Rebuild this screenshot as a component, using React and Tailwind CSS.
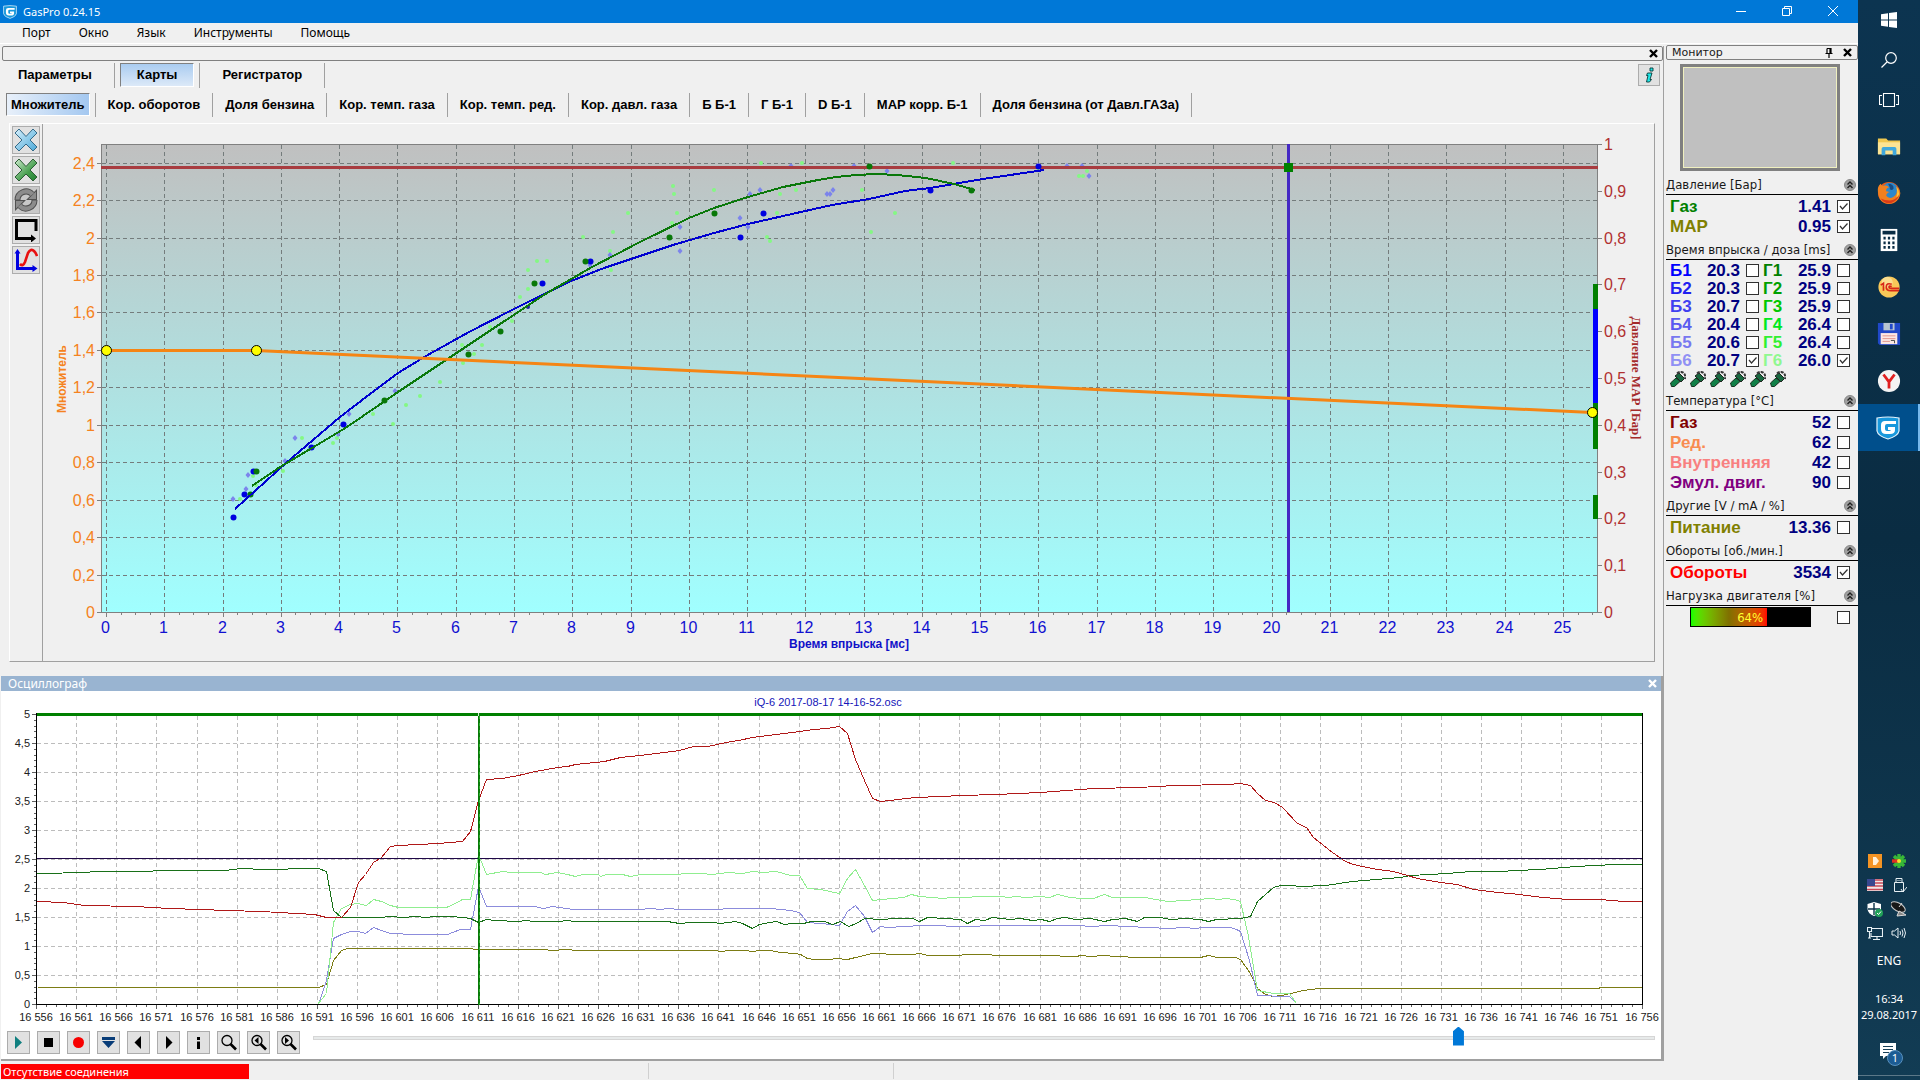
//gaspro main window
import React, { useState } from "react";

const mapTabs = [
  "Множитель",
  "Кор. оборотов",
  "Доля бензина",
  "Кор. темп. газа",
  "Кор. темп. ред.",
  "Кор. давл. газа",
  "Б Б-1",
  "Г Б-1",
  "D Б-1",
  "МАР корр. Б-1",
  "Доля бензина (от Давл.ГАЗа)",
];

const injectors = [
  { n: 1, petrol: "20.3", gas: "25.9", pc: "text-[#0000ff]", gc: "text-[#008000]" },
  { n: 2, petrol: "20.3", gas: "25.9", pc: "text-[#2020f0]", gc: "text-[#00a000]" },
  { n: 3, petrol: "20.7", gas: "25.9", pc: "text-[#4040f0]", gc: "text-[#00c800]" },
  { n: 4, petrol: "20.4", gas: "26.4", pc: "text-[#5a5af0]", gc: "text-[#00e820]" },
  { n: 5, petrol: "20.6", gas: "26.4", pc: "text-[#7878f0]", gc: "text-[#30f030]" },
  { n: 6, petrol: "20.7", gas: "26.0", pc: "text-[#9090f4]", gc: "text-[#90f890]", on: true },
];

// ---------------------- MAP CHART DATA ----------------------
const blueCurve =
  "235,509 286,463 340,417 370,394 398,373 426,356 469,332 514,309 571,281 604,268 640,256 673,245 714,233 748,224 783,216 832,205 869,199 905,191 930,188 983,179 1044,170";
const greenCurve =
  "252,486 280,467 312,448 347,427 398,392 449,358 500,324 547,293 592,267 640,242 689,218 714,208 748,197 783,187 818,180 836,177 856,175 876,174 897,175 926,178 954,184 975,190";

const bluePoints = [
  [233, 517], [244, 494], [253, 471], [311, 447], [343, 424], [542, 283],
  [590, 261], [740, 237], [763, 213], [930, 190], [1038, 166],
];
const greenPoints = [
  [250, 494], [256, 471], [384, 400], [468, 354], [500, 331], [534, 283],
  [585, 261], [669, 237], [714, 213], [971, 190], [869, 166],
];
const lilacPoints = [
  [233, 499], [246, 489], [248, 475], [285, 461], [295, 438], [338, 434],
  [349, 414], [395, 391], [590, 265], [610, 255], [680, 227], [680, 251],
  [740, 218], [748, 227], [750, 194], [760, 190], [827, 194], [830, 194],
  [833, 190], [887, 171], [791, 166], [854, 166], [1067, 166], [1082, 166],
  [1089, 176],
];
const limePoints = [
  [240, 499], [253, 476], [256, 485], [283, 471], [302, 438], [333, 443],
  [337, 438], [373, 414], [393, 424], [406, 405], [420, 396], [440, 382],
  [462, 345], [463, 363], [474, 354], [482, 345], [490, 327], [512, 321],
  [520, 297], [528, 289], [528, 270], [537, 261], [547, 261], [583, 237],
  [610, 251], [611, 270], [613, 232], [628, 213], [672, 223], [673, 186],
  [674, 194], [677, 213], [714, 190], [761, 163], [767, 237], [770, 241],
  [777, 213], [780, 194], [796, 190], [802, 163], [862, 190], [871, 232],
  [895, 213], [953, 163], [1038, 168], [1079, 176], [1083, 176], [1087, 171],
];

// ---------------------- OSCILLOGRAPH DATA ----------------------
const traces = [
  {
    color: "#7c7c14",
    points:
      "37,987 318,987 326,984 333,960 341,950 347,948 465,948 480,949 545,949 550,950 567,949 575,950 715,950 720,951 730,950 745,950 752,951 760,950 770,950 780,952 795,953 800,954 807,958 814,959 830,959 835,958 847,959 855,957 872,953 883,953 888,954 912,954 919,953 928,955 958,955 965,954 988,954 995,955 1055,955 1063,956 1075,956 1081,955 1090,956 1104,955 1115,956 1140,957 1200,957 1208,955 1217,957 1235,957 1240,959 1250,973 1257,988 1265,994 1273,996 1281,995 1290,993 1303,990 1318,988 1598,988 1600,987 1642,987",
  },
  {
    color: "#8c8cdc",
    points:
      "318,1004 326,980 333,938 341,934 350,931 358,931 365,933 373,927 381,930 390,933 400,933 405,934 447,934 460,929 470,929 478,886 486,906 534,906 543,908 552,906 573,909 640,909 650,908 660,909 667,908 680,909 715,909 730,908 770,908 790,910 799,912 807,922 820,923 830,924 839,925 847,911 855,905 864,916 872,932 880,926 887,927 905,926 920,925 970,926 990,925 1030,925 1080,925 1088,926 1110,925 1125,926 1150,927 1167,928 1185,927 1193,928 1205,927 1230,927 1236,929 1240,931 1249,960 1257,995 1271,995 1272,996 1289,996 1296,1003",
  },
  {
    color: "#90ee90",
    points:
      "317,1004 326,993 333,922 341,908 350,904 357,903 366,905 373,899 381,901 390,905 398,907 420,907 446,907 455,903 462,899 470,899 478,854 486,874 502,871 510,872 540,872 545,874 557,872 567,874 575,876 582,874 598,874 600,876 606,874 622,874 630,876 640,874 676,874 685,873 700,873 712,874 727,872 742,873 752,871 762,872 776,871 790,875 799,875 807,888 820,889 839,893 847,878 855,869 864,885 872,900 892,898 903,897 911,894 919,896 932,897 943,898 950,897 967,897 976,896 1000,896 1008,897 1016,896 1025,897 1040,896 1049,897 1057,894 1070,897 1080,898 1093,898 1104,894 1112,897 1145,897 1155,899 1168,901 1183,900 1198,899 1210,898 1218,899 1225,898 1234,899 1240,901 1248,936 1257,990 1273,993 1289,993 1296,1003",
  },
  {
    color: "#187018",
    points:
      "37,873 88,872 91,871 150,871 155,870 224,870 241,868 248,868 257,869 318,868 326,871 333,910 341,917 380,917 390,916 402,917 415,916 425,917 435,916 450,916 463,917 470,918 478,922 486,919 494,920 518,921 525,920 534,921 559,921 566,920 574,921 667,921 679,923 690,922 712,922 720,923 735,921 742,923 752,928 759,924 769,922 776,921 784,924 791,923 803,923 811,921 824,921 832,924 840,921 848,926 856,923 864,918 880,919 895,918 912,918 919,921 927,917 945,918 960,919 967,923 975,919 984,920 992,917 1010,919 1020,918 1032,920 1041,919 1049,921 1057,918 1065,917 1075,919 1090,918 1104,921 1112,919 1125,918 1137,921 1144,917 1160,917 1170,919 1185,918 1200,919 1208,921 1216,919 1240,918 1250,916 1257,901 1265,894 1273,887 1280,885 1290,885 1300,886 1325,885 1352,881 1375,879 1400,877 1410,875 1447,873 1470,871 1500,871 1515,870 1540,869 1575,866 1595,865 1615,864 1642,864",
  },
  {
    color: "#b01818",
    points:
      "37,901 63,902 84,905 135,906 169,908 200,909 226,910 261,911 314,914 326,917 341,917 350,907 358,882 365,874 373,862 381,857 390,846 398,845 438,843 462,841 470,831 478,800 486,779 502,778 518,775 535,771 557,767 567,766 575,764 604,761 620,757 640,755 679,750 693,746 707,746 726,742 738,740 752,737 799,731 813,729 827,728 839,726 847,733 855,759 864,780 872,798 880,801 889,800 915,797 940,796 962,795 995,794 1040,792 1093,788 1138,787 1175,785 1228,784 1240,783 1250,785 1257,793 1265,800 1274,802 1282,807 1297,823 1306,827 1313,837 1332,852 1345,861 1353,864 1362,866 1377,869 1393,871 1407,875 1417,878 1440,882 1457,884 1473,889 1497,892 1510,893 1543,897 1567,899 1600,899 1623,901 1642,901",
  },
];

const range = (n) => Array.from({ length: n }, (_, i) => i);
const comma = (v) => String(Math.round(v * 10) / 10).replace(".", ",");

function MapChart() {
  const px = (v) => Math.round(106 + v * 58.28) + 0.5;
  const py = (v) => Math.round(612 - v * 187.2) + 0.5;

  return (
    <svg
      viewBox="43 124 1611 537"
      className="block h-full w-full font-['Liberation_Sans',Arial,sans-serif]"
    >
      <defs>
        <linearGradient id="plotFill" x1="0" y1="0" x2="0" y2="1">
          <stop offset="0" stopColor="#c0c0c0" />
          <stop offset="1" stopColor="#a0ffff" />
        </linearGradient>
      </defs>
      <rect x="102" y="145" width="1496" height="468" fill="url(#plotFill)" />

      {/* grid */}
      <g stroke="#747c7c" strokeDasharray="4 3" shapeRendering="crispEdges">
        {range(26).map((i) => (
          <line key={i} x1={px(i)} y1="145" x2={px(i)} y2="612" />
        ))}
        {range(12).map((i) => (
          <line key={i} x1="102" y1={py((i + 1) * 0.2)} x2="1598" y2={py((i + 1) * 0.2)} />
        ))}
      </g>

      {/* frame and ticks */}
      <g stroke="#808080" fill="none" shapeRendering="crispEdges">
        <rect x="101.5" y="144.5" width="1496" height="468" />
        {range(13).map((i) => (
          <line key={i} x1="97" y1={py(i * 0.2)} x2="101" y2={py(i * 0.2)} />
        ))}
        {range(11).map((i) => (
          <line key={i} x1="1598" y1={612.5 - i * 46.8} x2="1602" y2={612.5 - i * 46.8} />
        ))}
        {range(103).map((i) => (
          <line key={i} x1={px(i / 4)} y1="613" x2={px(i / 4)} y2={i % 4 ? 615 : 617} />
        ))}
      </g>

      {/* axis numbers */}
      <g fontSize="16">
        {range(13).map((i) => (
          <text key={i} x="95" y={py(i * 0.2) + 5.5} textAnchor="end" fill="#f58220">
            {comma(i * 0.2)}
          </text>
        ))}
        {range(26).map((i) => (
          <text key={i} x={px(i) - 1} y="633" textAnchor="middle" fill="#1010d0">
            {i}
          </text>
        ))}
        {range(11).map((i) => (
          <text key={i} x="1604" y={Math.round(618 - i * 46.8)} fill="#b03030">
            {comma(i * 0.1)}
          </text>
        ))}
      </g>
      <text x="849" y="648" textAnchor="middle" fontSize="12" fontWeight="700" fill="#1010c8">
        Время впрыска [мс]
      </text>
      <text
        transform="translate(66 379) rotate(-90)"
        textAnchor="middle"
        fontSize="12"
        fontWeight="700"
        fill="#f58220"
      >
        Множитель
      </text>
      <text
        transform="translate(1632 378) rotate(90)"
        textAnchor="middle"
        fontSize="13"
        fontWeight="700"
        fill="#a52a2a"
        className="font-['Liberation_Serif','Times_New_Roman',serif]"
      >
        Давление МАР [Бар]
      </text>

      {/* collected points */}
      <g fill="#84f884">
        {limePoints.map(([x, y]) => (
          <circle key={`${x}-${y}`} cx={x} cy={y} r="2" />
        ))}
      </g>
      <g fill="#7c84ec">
        {lilacPoints.map(([x, y]) => (
          <path key={`${x}-${y}`} d={`M${x} ${y - 3}l2.5 3l-2.5 3l-2.5-3z`} />
        ))}
      </g>
      <rect x="101" y="166" width="1497" height="3" fill="#a83c40" />
      <g fill="#0000e0">
        {bluePoints.map(([x, y]) => (
          <circle key={`${x}-${y}`} cx={x + 0.5} cy={y + 0.5} r="3" />
        ))}
        <circle cx="528" cy="307" r="2" fill="#2020a0" />
      </g>
      <g fill="#087808">
        {greenPoints.map(([x, y]) => (
          <circle key={`${x}-${y}`} cx={x + 0.5} cy={y + 0.5} r="3" />
        ))}
      </g>
      <g fill="none" strokeWidth="2" shapeRendering="crispEdges">
        <polyline points={blueCurve} stroke="#0000d0" />
        <polyline points={greenCurve} stroke="#0a780a" />
      </g>

      {/* live position */}
      <rect x="1287" y="144" width="3" height="468" fill="#4428c4" />
      <rect x="1284" y="163" width="9" height="9" fill="#008000" />

      {/* zone bars on the right edge */}
      <rect x="1593" y="284" width="5" height="25" fill="#008000" />
      <rect x="1593" y="309" width="5" height="94" fill="#0000ff" />
      <rect x="1593" y="403" width="5" height="46" fill="#008000" />
      <rect x="1593" y="495" width="5" height="24" fill="#008000" />

      <polyline points="106,350.5 256,350.5 1592,412.5" fill="none" stroke="#f58514" strokeWidth="3" />
      <g fill="#ffff00" stroke="#000">
        <circle cx="106.5" cy="350.5" r="5" />
        <circle cx="256.5" cy="350.5" r="5" />
        <circle cx="1592.5" cy="412.5" r="5" />
      </g>
    </svg>
  );
}

function OscChart() {
  const px = (i) => Math.round(36 + i * 40.14) + 0.5;

  return (
    <svg
      viewBox="1 691 1660 333"
      className="block w-full font-['Liberation_Sans',Arial,sans-serif]"
    >
      <text x="828" y="706" textAnchor="middle" fontSize="11" fill="#1414b8">
        iQ-6 2017-08-17 14-16-52.osc
      </text>
      <g stroke="#bcbcbc" strokeDasharray="4 3" shapeRendering="crispEdges">
        {range(40).map((i) => (
          <line key={i} x1={px(i)} y1="716" x2={px(i)} y2="1003" />
        ))}
        {range(9).map((i) => (
          <line key={i} x1="37" y1={975.5 - i * 29} x2="1642" y2={975.5 - i * 29} />
        ))}
      </g>
      <g stroke="#606060" shapeRendering="crispEdges">
        {range(161).map((i) => (
          <line key={i} x1={px(i / 4)} y1="1005" x2={px(i / 4)} y2={i % 4 ? 1007 : 1009} />
        ))}
        {range(51).map((i) => (
          <line
            key={i}
            x1={i % 5 ? 34 : 32}
            y1={Math.round(1004 - i * 5.8) + 0.5}
            x2="37"
            y2={Math.round(1004 - i * 5.8) + 0.5}
          />
        ))}
      </g>
      <g fontSize="11" fill="#202020">
        {range(11).map((i) => (
          <text key={i} x="30" y={1008 - i * 29} textAnchor="end">
            {comma(i * 0.5)}
          </text>
        ))}
        {range(41).map((i) => (
          <text key={i} x={px(i) - 0.5} y="1021" textAnchor="middle">
            {`16 ${556 + i * 5}`}
          </text>
        ))}
      </g>

      {traces.map((t) => (
        <polyline
          key={t.color}
          points={t.points}
          transform="translate(.5 .5)"
          fill="none"
          stroke={t.color}
          shapeRendering="crispEdges"
        />
      ))}
      <g shapeRendering="crispEdges">
        <rect x="37" y="858" width="1605" height="1" fill="#200848" />
        <rect x="36" y="713" width="1" height="292" fill="#000" />
        <rect x="36" y="1004" width="1607" height="1" fill="#000" />
        <rect x="1642" y="713" width="1" height="292" fill="#000" />
        <rect x="37" y="713" width="1605" height="3" fill="#008000" />
        <rect x="478" y="713" width="2" height="292" fill="#0a7a0a" />
        <line x1="479.5" y1="716" x2="479.5" y2="1004" stroke="#30b030" strokeDasharray="3 4" />
        <rect x="478" y="713" width="1" height="3" fill="#d0f0d0" />
      </g>
    </svg>
  );
}

function Logo({ className }) {
  return (
    <svg viewBox="0 0 24 24" className={className}>
      <path d="M1 2Q12 0 23 2V15Q22 20 12 23Q2 20 1 15Z" fill="#1898dc" stroke="#e8f4fc" strokeWidth="1.2" />
      <path d="M20 5H9Q5 5 5 9V13Q5 18 10 18H14Q19 18 19 14V11H12V14H15Q14.5 15 13 15H11Q9 15 9 13V10Q9 8 11 8H20Z" fill="#fff" />
    </svg>
  );
}

function CloseMark({ className }) {
  return (
    <svg viewBox="0 0 9 9" className={className}>
      <path d="M1 1L8 8M8 1L1 8" fill="none" stroke="currentColor" strokeWidth="2.4" />
    </svg>
  );
}

function Check({ id, label, checked }) {
  return (
    <span className="relative block h-[13px] w-[13px] shrink-0">
      <input
        id={id}
        type="checkbox"
        aria-label={label}
        defaultChecked={checked}
        className="peer block h-[13px] w-[13px] appearance-none border border-[#303030] bg-white"
      />
      <svg
        viewBox="0 0 13 13"
        className="pointer-events-none absolute inset-0 hidden h-[13px] w-[13px] peer-checked:block"
      >
        <path d="M3 6L5.5 9L10.5 3.5" fill="none" stroke="#303030" strokeWidth="1.2" />
      </svg>
    </span>
  );
}

function Section({ title, children }) {
  const [open, setOpen] = useState(true);
  return (
    <section>
      <h2 className="flex h-5 items-center justify-between border-b border-black pr-[2px] font-['DejaVu_Sans_Condensed','DejaVu_Sans',sans-serif] text-[13px] leading-none font-normal whitespace-nowrap text-[#181818]">
        {title}
        <button aria-label={title} onClick={() => setOpen(!open)}>
          <svg viewBox="0 0 12 12" className="block h-3 w-3">
            <circle cx="6" cy="6" r="5.5" fill="#a0a0a0" stroke="#888" />
            <path d="M3.5 5.5L6 3L8.5 5.5M3.5 9L6 6.5L8.5 9" fill="none" stroke="#202020" strokeWidth="1.4" />
          </svg>
        </button>
      </h2>
      {open && <div className="pt-px pr-2 pb-1 pl-1">{children}</div>}
    </section>
  );
}

function Reading({ id, name, value, color, checked }) {
  return (
    <div className="flex h-5 items-center">
      <label htmlFor={id} className={`flex-1 ${color}`}>
        {name}
      </label>
      <output className="mr-[6px] text-[#000080]">{value}</output>
      <Check id={id} checked={checked} />
    </div>
  );
}

function Monitor() {
  return (
    <aside className="w-[194px] shrink-0 pl-[2px]">
      <div className="-mt-px flex h-[15px] items-center rounded-[2px] border border-[#808080] pl-[5px]">
        <span className="flex-1 font-['DejaVu_Sans',sans-serif] text-[11px] leading-none text-[#181818]">
          Монитор
        </span>
        <button aria-label="Закрепить" className="mr-[10px]">
          <svg viewBox="0 0 8 10" className="block h-[10px] w-2">
            <path d="M2 0.5H6V5.5M2 0.5V5.5M0.5 5.5H7.5M4 6V10M5 1V5" fill="none" stroke="#000" strokeWidth="1.2" />
          </svg>
        </button>
        <button aria-label="Закрыть монитор" className="mr-[5px] text-black">
          <CloseMark className="block h-[9px] w-[9px]" />
        </button>
      </div>
      <div className="mt-1 mb-1 ml-[14px] h-[107px] w-40 border-[3px] border-[#808080] bg-[#c0c0c0]">
        <div className="h-full w-full border border-[#f0f0c0]" />
      </div>

      <div className="font-['Liberation_Sans',Arial,sans-serif] text-[17px] leading-none font-bold">
        <Section title="Давление [Бар]">
          <Reading id="pGas" name="Газ" value="1.41" color="text-[#008000]" checked />
          <Reading id="pMap" name="MAP" value="0.95" color="text-[#808000]" checked />
        </Section>

        <Section title="Время впрыска / доза [ms]">
          {injectors.map((row) => (
            <div key={row.n} className="flex h-[18px] items-center">
              <label htmlFor={`petrol${row.n}`} className={`w-8 ${row.pc}`}>
                {`Б${row.n}`}
              </label>
              <output className="mr-[6px] flex-1 text-right text-[#000080]">{row.petrol}</output>
              <Check id={`petrol${row.n}`} checked={row.on} />
              <label htmlFor={`gas${row.n}`} className={`ml-1 w-[30px] ${row.gc}`}>
                {`Г${row.n}`}
              </label>
              <output className="mr-[6px] flex-1 text-right text-[#000080]">{row.gas}</output>
              <Check id={`gas${row.n}`} checked={row.on} />
            </div>
          ))}
          <div className="flex h-[18px] items-end gap-1">
            {range(6).map((i) => (
              <svg key={i} viewBox="0 0 16 16" className="h-4 w-4">
                <path d="M0.5 12L6 7L10 10.5L4.5 15.5H1.5Z" fill="#108048" stroke="#183020" />
                <path d="M5 5L9 2L14.5 7.5L11 11Z" fill="#186840" stroke="#202820" />
                <path d="M7 2.5Q10 0 13 1.5Q16 3.5 15 8" fill="none" stroke="#383838" strokeWidth="2" strokeDasharray="3 1" />
              </svg>
            ))}
          </div>
        </Section>

        <Section title="Температура [°C]">
          <Reading id="tGas" name="Газ" value="52" color="text-[#800000]" />
          <Reading id="tRed" name="Ред." value="62" color="text-[#f88c50]" />
          <Reading id="tInt" name="Внутренняя" value="42" color="text-[#f88080]" />
          <Reading id="tEmu" name="Эмул. двиг." value="90" color="text-[#800080]" />
        </Section>

        <Section title="Другие [V / mA / %]">
          <Reading id="supply" name="Питание" value="13.36" color="text-[#808000]" />
        </Section>

        <Section title="Обороты [об./мин.]">
          <Reading id="rpm" name="Обороты" value="3534" color="text-[#ff0000]" checked />
        </Section>

        <Section title="Нагрузка двигателя [%]">
          <div className="flex items-center justify-between pl-5">
            <div className="flex h-5 w-[121px] border border-black bg-black">
              <div
                className="flex items-center justify-end bg-linear-to-r from-[#00ff00] via-[#807000] to-[#ff0000] pr-1 font-['DejaVu_Sans_Condensed','DejaVu_Sans',sans-serif] text-[13px] font-normal text-[#ffff30]"
                style={{ width: "64%" }}
              >
                64%
              </div>
            </div>
            <Check id="load" label="Нагрузка двигателя" />
          </div>
        </Section>
      </div>
    </aside>
  );
}

function SideTools() {
  const btn =
    "flex h-7 w-7 items-center justify-center border border-[#acacac] bg-[#e1e1e1]";
  const cross = "M5 1L12 8.5L19 1L23 5L16 12L23 19L19 23L12 16L5 23L1 19L8 12L1 5Z";
  return (
    <div className="flex w-[33px] shrink-0 flex-col gap-[2px] border-r border-[#a0a0a0] pt-[2px] pl-[2px]">
      <button className={btn} aria-label="Сброс бензина">
        <svg viewBox="0 0 24 24" className="h-6 w-6">
          <defs>
            <linearGradient id="cyanX" x1="0" y1="0" x2="1" y2="1">
              <stop offset="0" stopColor="#d8f0fc" />
              <stop offset="1" stopColor="#48a8d8" />
            </linearGradient>
          </defs>
          <path d={cross} fill="url(#cyanX)" stroke="#346a88" />
        </svg>
      </button>
      <button className={btn} aria-label="Сброс газа">
        <svg viewBox="0 0 24 24" className="h-6 w-6">
          <defs>
            <linearGradient id="greenX" x1="0" y1="0" x2="1" y2="1">
              <stop offset="0" stopColor="#d0ecd0" />
              <stop offset=".6" stopColor="#48a050" />
              <stop offset="1" stopColor="#208030" />
            </linearGradient>
          </defs>
          <path d={cross} fill="url(#greenX)" stroke="#2c5c34" />
        </svg>
      </button>
      <button
        className="flex h-7 w-7 items-center justify-center border border-[#acacac] bg-[#c8c8c8]"
        aria-label="Обновить"
      >
        <svg viewBox="0 0 24 24" className="h-6 w-6">
          <g fill="none" stroke="#505050" strokeWidth="6">
            <path d="M3.5 12A8.5 8.5 0 0 1 18 6" />
            <path d="M20.5 12A8.5 8.5 0 0 1 6 18" />
          </g>
          <path d="M23 1V12H12ZM1 23V12H12Z" fill="#505050" />
          <g fill="none" stroke="#8c8c8c" strokeWidth="4">
            <path d="M3.5 11.5A8.5 8.5 0 0 1 18.5 6.5" />
            <path d="M20.5 12.5A8.5 8.5 0 0 1 5.5 17.5" />
          </g>
          <path d="M22 3.5V11H14.5ZM2 20.5V13H9.500Z" fill="#8c8c8c" />
        </svg>
      </button>
      <button className={btn} aria-label="Выделить область">
        <svg viewBox="0 0 24 24" className="h-6 w-6">
          <path d="M22 13V2.5H2.5V20.5H18" fill="none" stroke="#000" strokeWidth="3" />
          <path d="M17 16.5L22 20.5L17 24.5Z" fill="#000" />
        </svg>
      </button>
      <button className={btn} aria-label="График">
        <svg viewBox="0 0 24 24" className="h-6 w-6">
          <path d="M3.5 3V20.5H20" fill="none" stroke="#0000e0" strokeWidth="3" />
          <path d="M0.5 5.5L3.5 1L6.5 5.5ZM18.5 17L23.5 20.5L18.5 24Z" fill="#0000e0" />
          <path d="M6 16Q9 19 11 14L14 5Q17 0 20 3Q22 5 23 8" fill="none" stroke="#e81010" strokeWidth="2.6" />
        </svg>
      </button>
    </div>
  );
}

const transport = [
  { name: "Пуск", icon: <path d="M7 4L14 10.5L7 17Z" fill="#108080" /> },
  { name: "Стоп", icon: <path d="M6 6H15V15H6Z" fill="#000" /> },
  { name: "Запись", icon: <circle cx="10.5" cy="10.5" r="5.5" fill="#f80000" /> },
  { name: "Сохранить", icon: <path d="M4 5H17V8H4ZM4 9H17L10.5 16Z" fill="#083c78" /> },
  { name: "Назад", icon: <path d="M13 4V17L6.5 10.5Z" fill="#000" /> },
  { name: "Вперед", icon: <path d="M8 4V17L14.5 10.5Z" fill="#000" /> },
  { name: "Информация", icon: <path d="M9 5H12V8H9ZM9 9.5H12V17H9Z" fill="#000" /> },
  { name: "Масштаб", lens: true },
  { name: "Уменьшить", lens: true, icon: <path d="M10.5 5V12L6.5 8.5Z" fill="#000" /> },
  { name: "Увеличить", lens: true, icon: <path d="M7 5V12L11 8.5Z" fill="#000" /> },
];

function Oscillograph() {
  return (
    <section className="border-r-2 border-b-2 border-[#a0a0a0] bg-white">
      <div className="flex h-[15px] items-center bg-[#99b4d1] pr-1 pl-[7px] text-white">
        <h2 className="flex-1 pt-px text-[12px] leading-none">Осциллограф</h2>
        <button aria-label="Закрыть осциллограф">
          <CloseMark className="block h-[9px] w-[9px]" />
        </button>
      </div>
      <OscChart />
      <div className="flex h-[35px] items-center gap-[7px] pt-[2px] pr-[6px] pl-[6px]">
        {transport.map((b) => (
          <button
            key={b.name}
            aria-label={b.name}
            className="flex h-[23px] w-[23px] shrink-0 items-center justify-center border border-[#acacac] bg-[#e1e1e1]"
          >
            <svg viewBox="0 0 21 21" className="h-[21px] w-[21px]">
              {b.lens && (
                <g fill="none" stroke="#000">
                  <circle cx="9" cy="8.5" r="5" strokeWidth="1.3" />
                  <path d="M12.5 12L18 17.5" strokeWidth="2.6" />
                </g>
              )}
              {b.icon}
            </svg>
          </button>
        ))}
        <input
          type="range"
          aria-label="Позиция"
          min="0"
          max="1000"
          defaultValue="857"
          className="mb-[10px] ml-[6px] h-[19px] flex-1 appearance-none bg-transparent [&::-webkit-slider-runnable-track]:h-1 [&::-webkit-slider-runnable-track]:border [&::-webkit-slider-runnable-track]:border-[#d6d6d6] [&::-webkit-slider-runnable-track]:bg-[#e7eaea] [&::-webkit-slider-thumb]:-mt-[10px] [&::-webkit-slider-thumb]:h-[19px] [&::-webkit-slider-thumb]:w-[11px] [&::-webkit-slider-thumb]:appearance-none [&::-webkit-slider-thumb]:bg-[#0078d7] [&::-webkit-slider-thumb]:[clip-path:polygon(50%_0,100%_25%,100%_100%,0_100%,0_25%)]"
        />
      </div>
    </section>
  );
}

// ---------------------- TASKBAR ----------------------
const pinned = [
  {
    name: "Проводник",
    icon: (
      <>
        <path d="M1 5H10L12 7H25V22H1Z" fill="#f0c850" />
        <path d="M1 9H25V22H1Z" fill="#fce494" />
        <path d="M5 23V16Q5 14 7 14H19Q21 14 21 16V23H17V18H9V23Z" fill="#40a8dc" />
      </>
    ),
  },
  {
    name: "Firefox",
    icon: (
      <>
        <circle cx="13" cy="13" r="12" fill="#e85a18" />
        <circle cx="14" cy="11" r="9" fill="#2c88cc" />
        <path d="M1 12Q0 6 4 3Q5 6 8 5Q11 4 13 7Q9 8 10 11L14 12Q10 13 10 16Q13 20 18 17Q23 14 21 6Q26 10 25 15Q23 24 13 25Q2 24 1 12Z" fill="#f08020" />
        <path d="M4 19Q8 25 15 24Q22 22 24 15Q20 21 14 21Q8 21 4 19Z" fill="#dc3c18" />
        <path d="M21 6Q24 10 24 14Q23 17 21 18Q23 12 21 6Z" fill="#fcc838" />
        <path d="M12 3Q18 3 18 8Q16 11 14 9Q14 6 12 3Z" fill="#184c84" />
      </>
    ),
  },
  {
    name: "Калькулятор",
    icon: (
      <>
        <path d="M4 1H22V25H4Z" fill="#fff" />
        <path d="M6 3H20V7H6Z" fill="#0a2c44" />
        <path d="M7 11H19M7 16H19M7 21H19" stroke="#0a2c44" strokeWidth="3" strokeDasharray="2.4 2.4" />
      </>
    ),
  },
  {
    name: "1С",
    icon: (
      <>
        <circle cx="13" cy="13" r="11.5" fill="#f8c858" />
        <circle cx="11" cy="8" r="6" fill="#fce8a8" opacity=".7" />
        <path d="M4 11L7 9V17M16 10Q10 8 10 13Q10 17 15 17H24M16 12.5Q13 11.5 13 13Q13 14.5 16 14.5H24" fill="none" stroke="#d82818" strokeWidth="1.8" />
      </>
    ),
  },
  {
    name: "Дискета",
    icon: (
      <>
        <path d="M1 1H25V25H3L1 23Z" fill="#2048c8" />
        <path d="M7 1H19V9H7Z" fill="#b8c4d0" />
        <path d="M14 2H17V8H14Z" fill="#2048c8" />
        <path d="M4 12H22V24H4Z" fill="#fce8e4" />
        <path d="M6 15H20M6 18H20M6 21H14" stroke="#e09088" />
        <path d="M15 20H19V23" fill="none" stroke="#404040" />
      </>
    ),
  },
  {
    name: "Yandex",
    icon: (
      <>
        <circle cx="13" cy="13" r="12" fill="#f4f4f4" />
        <path d="M7 6L13 14L19 6M13 13V21" fill="none" stroke="#e02020" strokeWidth="3" />
      </>
    ),
  },
];

const tray = [
  {
    name: "Плеер",
    icon: (
      <>
        <path d="M1 1H15V15H1Z" fill="#f49424" />
        <path d="M6 4H9L12 8L9 12H6Z" fill="#fff0d8" />
      </>
    ),
  },
  {
    name: "ICQ",
    icon: (
      <>
        <path d="M8 8L8 1M8 8L13 3M8 8H15M8 8L13 13M8 8V15M8 8L3 13M8 8L3 3" stroke="#38b838" strokeWidth="3.4" />
        <path d="M8 8H1" stroke="#e03020" strokeWidth="3.4" />
        <circle cx="8" cy="8" r="2" fill="#f8e030" />
      </>
    ),
  },
  {
    name: "Раскладка",
    icon: (
      <>
        <path d="M0 2H16V14H0Z" fill="#f0e8e8" />
        <path d="M0 3H16M0 6H16M0 9H16M0 12.5H16" stroke="#c84858" strokeWidth="1.5" />
        <path d="M0 2H8V9H0Z" fill="#384890" />
      </>
    ),
  },
  {
    name: "USB",
    icon: (
      <path d="M5 5V1.5H11V5M3.5 5.5H12.5V14.5H3.5ZM7 3V4M9 3V4M10 12L12 15L16 10" fill="none" stroke="#e8f0f4" />
    ),
  },
  {
    name: "Защитник",
    icon: (
      <>
        <path d="M7 1L14 3V8Q13 13 7 15Q1 13 0.5 8V3Z" fill="#fff" />
        <path d="M7 2V14M1 8H13" stroke="#0c3448" strokeWidth="1.4" />
        <circle cx="12" cy="12" r="4" fill="#20a058" />
        <path d="M10 12L11.5 13.5L14 10.5" fill="none" stroke="#fff" />
      </>
    ),
  },
  {
    name: "Антенна",
    icon: (
      <>
        <ellipse cx="7" cy="6" rx="8" ry="4" transform="rotate(30 7 6)" fill="#181818" stroke="#c8c8c8" />
        <path d="M8 6L11 2M8 10L15 14L6 15Z" fill="#888" stroke="#d8d8d8" />
      </>
    ),
  },
  {
    name: "Сеть",
    icon: (
      <path d="M5 3.5H15.5V11.5H4V8M10 12V14.5M6 14.5H13M0.5 2.5H4.5V6.5H0.5ZM2.5 7V13M1 13H4" fill="none" stroke="#e8f0f4" strokeWidth="1.1" />
    ),
  },
  {
    name: "Звук",
    icon: (
      <path d="M1 6H3.5L7 3V13L3.5 10H1ZM9 6Q10 8 9 10M11 4.5Q13 8 11 11.5M13 3Q16 8 13 13" fill="none" stroke="#e8f0f4" />
    ),
  },
];

function Taskbar() {
  return (
    <nav className="flex w-[62px] shrink-0 flex-col items-center bg-linear-to-b from-[#0c3450] via-[#0a2c42] to-[#123c54] font-['Noto_Sans',sans-serif] text-white">
      <button aria-label="Пуск" className="flex h-10 w-full items-center justify-center">
        <svg viewBox="0 0 16 16" className="h-4 w-4">
          <path d="M0 2.2L7 1.2V7.5H0ZM8 1L16 0V7.5H8ZM0 8.5H7V14.8L0 13.8ZM8 8.5H16V16L8 15Z" fill="#fff" />
        </svg>
      </button>
      <button aria-label="Поиск" className="flex h-10 w-full items-center justify-center">
        <svg viewBox="0 0 16 16" className="h-4 w-4">
          <circle cx="10" cy="6" r="5.3" fill="none" stroke="#fff" strokeWidth="1.2" />
          <path d="M6 10L0.5 15.5" stroke="#fff" strokeWidth="1.3" />
        </svg>
      </button>
      <button aria-label="Представление задач" className="mb-[2px] flex h-10 w-full items-center justify-center">
        <svg viewBox="0 0 20 16" className="h-4 w-5">
          <path d="M4.5 1.5H15.5V14.5H4.5ZM3 3.5H0.5V12.5H3M17 3.5H19.5V12.5H17" fill="none" stroke="#fff" strokeWidth="1.1" />
        </svg>
      </button>
      {pinned.map((p) => (
        <button key={p.name} aria-label={p.name} className="flex h-[47px] w-full items-center justify-center">
          <svg viewBox="0 0 26 26" className="h-6 w-6">
            {p.icon}
          </svg>
        </button>
      ))}
      <button
        aria-label="GasPro"
        className="flex h-[47px] w-full items-center justify-center border-r-2 border-[#76b9ed] bg-[#004f8c]"
      >
        <Logo className="h-6 w-6" />
      </button>

      <div className="mt-auto grid grid-cols-2 gap-x-2 gap-y-2 pr-1">
        {tray.map((t) => (
          <button key={t.name} aria-label={t.name}>
            <svg viewBox="0 0 16 16" className="block h-4 w-4">
              {t.icon}
            </svg>
          </button>
        ))}
      </div>
      <button className="mt-3 text-[12px] leading-4">ENG</button>
      <div className="mt-[22px] text-center text-[11px] leading-4">
        <p>16:34</p>
        <p>29.08.2017</p>
      </div>
      <button aria-label="Уведомления" className="mt-[18px] mb-1 flex w-full justify-center border-b border-[#5c7888] pb-2">
        <svg viewBox="0 0 26 26" className="ml-1 h-[26px] w-[26px]">
          <path d="M2 2H18V15H8L5 18V15H2Z" fill="#fff" />
          <path d="M5 5.5H15M5 8.5H15M5 11.5H11" stroke="#184058" />
          <circle cx="17" cy="17" r="7.5" fill="#1c5c94" stroke="#5890bc" />
          <text x="17" y="21" textAnchor="middle" fontSize="11" fill="#fff">
            1
          </text>
        </svg>
      </button>
    </nav>
  );
}

export default function App() {
  const [page, setPage] = useState("Карты");
  const [mapTab, setMapTab] = useState("Множитель");

  return (
    <div className="flex h-screen w-full overflow-hidden bg-[#f0f0f0] font-['Noto_Sans',sans-serif] text-black">
      <div className="flex min-w-0 flex-1 flex-col">
        {/* Title bar */}
        <header className="flex h-[23px] shrink-0 items-center bg-[#0078d7] pl-[3px] text-white">
          <Logo className="h-[14px] w-[14px]" />
          <h1 className="flex-1 pl-[6px] text-[11px] leading-none">GasPro 0.24.15</h1>
          <div className="flex pr-[2px] pb-[2px]">
            <button aria-label="Свернуть" className="flex w-[46px] justify-center">
              <svg viewBox="0 0 10 10" className="h-[10px] w-[10px]">
                <path d="M0 5.5H10" stroke="#fff" />
              </svg>
            </button>
            <button aria-label="Восстановить" className="flex w-[46px] justify-center">
              <svg viewBox="0 0 10 10" className="h-[10px] w-[10px]">
                <path d="M0.5 2.5H7.5V9.5H0.5ZM2.5 2.5V0.5H9.5V7.5H7.5" fill="none" stroke="#fff" />
              </svg>
            </button>
            <button aria-label="Закрыть" className="flex w-[46px] justify-center">
              <svg viewBox="0 0 10 10" className="h-[10px] w-[10px]">
                <path d="M0 0L10 10M10 0L0 10" stroke="#fff" />
              </svg>
            </button>
          </div>
        </header>

        {/* Menu */}
        <div className="flex h-5 shrink-0 items-center gap-7 pl-[22px] text-[12px] leading-none">
          {["Порт", "Окно", "Язык", "Инструменты", "Помощь"].map((m) => (
            <button key={m}>{m}</button>
          ))}
        </div>

        <div className="flex min-h-0 flex-1 border-t border-white pt-[2px]">
          <main className="flex min-w-0 flex-1 flex-col border-r border-[#a0a0a0] pl-px">
            <div className="ml-px flex h-[15px] shrink-0 items-center justify-end rounded-[2px] border border-[#808080] pr-1">
              <button aria-label="Закрыть панель">
                <CloseMark className="block h-[9px] w-[9px]" />
              </button>
            </div>

            {/* Pages */}
            <div className="flex h-[30px] shrink-0 items-start justify-between pt-[2px] font-['Liberation_Sans',Arial,sans-serif] text-[13px] font-bold">
              <div className="flex">
                {["Параметры", "Карты", "Регистратор"].map((t) => (
                  <div key={t} className="flex h-[25px] border-r border-[#a0a0a0] px-[5px] first:pl-0">
                    <button
                      onClick={() => setPage(t)}
                      className={`h-6 border ${
                        page === t
                          ? "border-t-[#808080] border-r-white border-b-white border-l-[#808080] bg-linear-to-b from-[#aaccf0] to-[#dce9f8] px-4"
                          : "border-transparent px-4"
                      }`}
                    >
                      {t}
                    </button>
                  </div>
                ))}
              </div>
              <button
                aria-label="Информация"
                className="mt-px mr-[3px] flex h-[22px] w-[22px] items-center justify-center border border-[#acacac] bg-[#e1e1e1]"
              >
                <svg viewBox="0 0 9 16" className="h-4 w-[9px]">
                  <path d="M5 1H8V4H5ZM2.5 6H7L5 12.5H6.5L4.5 15H1.5L3 8.5H1.5Z" fill="#20e8e8" stroke="#083838" strokeWidth=".9" />
                </svg>
              </button>
            </div>

            {/* Maps */}
            <div className="flex h-8 shrink-0 pt-[2px] font-['Liberation_Sans',Arial,sans-serif] text-[13px] font-bold whitespace-nowrap">
              {mapTabs.map((t) => (
                <div key={t} className="flex h-6 border-r border-[#a0a0a0] px-[7px] first:px-[5px]">
                  <button
                    onClick={() => setMapTab(t)}
                    className={`h-[23px] border ${
                      mapTab === t
                        ? "border-t-[#808080] border-r-white border-b-white border-l-[#808080] bg-linear-to-r from-[#e8f0fa] to-[#a4c8f0] px-1"
                        : "border-transparent px-1"
                    }`}
                  >
                    {t}
                  </button>
                </div>
              ))}
            </div>

            <div className="mr-2 mb-[14px] ml-2 flex min-h-0 flex-1 border border-t-white border-r-[#a0a0a0] border-b-[#a0a0a0] border-l-white">
              <SideTools />
              <div className="min-h-0 min-w-0 flex-1">
                <MapChart />
              </div>
            </div>

            <Oscillograph />
          </main>
          <Monitor />
        </div>

        {/* Status bar */}
        <footer className="flex h-[19px] shrink-0 items-end pb-px pl-px text-[11px] leading-none">
          <div className="flex h-[15px] w-[248px] items-center bg-[#ff0000] pl-[2px] text-white">
            Отсутствие соединения
          </div>
          <div className="h-4 w-[400px] border-r border-[#d0d0d0]" />
          <div className="h-4 w-[245px] border-r border-[#d0d0d0]" />
        </footer>
      </div>
      <Taskbar />
    </div>
  );
}
